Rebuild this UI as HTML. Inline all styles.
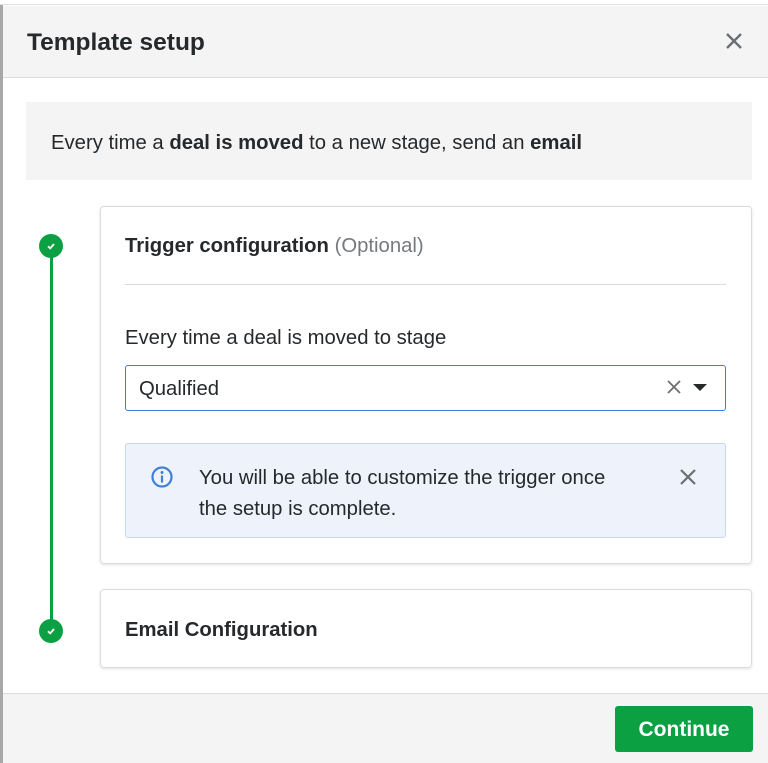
<!DOCTYPE html>
<html><head><style>
*{margin:0;padding:0;box-sizing:border-box}
body{width:768px;height:763px;background:#fff;font-family:"Liberation Sans",sans-serif;color:#26292c;position:relative;overflow:hidden}
.a{position:absolute}
.t{font-size:20.3px;white-space:nowrap}
.dot{width:24px;height:24px;border-radius:50%;background:#0aa043;left:39px}
</style></head><body>
<div class="a" style="left:0;top:0;width:768px;height:5px;background:#fff;border-bottom:1px solid #e0e0e0"></div>
<div class="a" style="left:0;top:5px;width:3px;height:758px;background:#a8a8a8"></div>
<div class="a" style="left:3px;top:6px;width:765px;height:72px;background:#f4f4f4;border-bottom:1px solid #dcdcdc"></div>
<div class="a" style="left:27px;top:29px;font-size:24.5px;font-weight:bold;white-space:nowrap">Template setup</div>
<svg class="a" style="left:725px;top:32px" width="18" height="18" viewBox="0 0 18 18"><path d="M2 2L16 16M16 2L2 16" stroke="#6b6f73" stroke-width="2.4"/></svg>
<div class="a" style="left:26px;top:102px;width:726px;height:78px;background:#f4f4f4"></div>
<div class="a t" style="left:51px;top:132px">Every time a <b>deal is moved</b> to a new stage, send an <b>email</b></div>
<div class="a" style="left:50px;top:246px;width:3px;height:385px;background:#0aa043"></div>
<div class="a dot" style="top:234px"></div>
<div class="a dot" style="top:619px"></div>
<svg class="a" style="left:45px;top:240px" width="12" height="12" viewBox="0 0 12 12"><path d="M3 6.3L5.2 8.3L9 4" stroke="#fff" stroke-width="1.8" fill="none"/></svg>
<svg class="a" style="left:45px;top:625px" width="12" height="12" viewBox="0 0 12 12"><path d="M3 6.3L5.2 8.3L9 4" stroke="#fff" stroke-width="1.8" fill="none"/></svg>
<div class="a" style="left:100px;top:206px;width:652px;height:358px;border:1px solid #dcdcdc;border-radius:4px;box-shadow:0 1px 3px rgba(0,0,0,.12)"></div>
<div class="a t" style="left:125px;top:235px"><b>Trigger configuration</b> <span style="color:#767a7e">(Optional)</span></div>
<div class="a" style="left:125px;top:284px;width:601px;height:1px;background:#dcdcdc"></div>
<div class="a t" style="left:125px;top:327px">Every time a deal is moved to stage</div>
<div class="a" style="left:125px;top:365px;width:601px;height:46px;border:1px solid #3f80d6;border-radius:3px"></div>
<div class="a t" style="left:139px;top:378px">Qualified</div>
<svg class="a" style="left:666px;top:379px" width="16" height="16" viewBox="0 0 16 16"><path d="M2 2L14 14M14 2L2 14" stroke="#6b6f73" stroke-width="1.8"/></svg>
<svg class="a" style="left:692px;top:383px" width="16" height="10" viewBox="0 0 16 10"><path d="M1 1H15L8 8Z" fill="#26292c"/></svg>
<div class="a" style="left:125px;top:443px;width:601px;height:95px;background:#eef3fb;border:1px solid #c8d8ef;border-radius:3px"></div>
<svg class="a" style="left:150px;top:465px" width="24" height="24" viewBox="0 0 24 24"><circle cx="12" cy="12" r="9.5" stroke="#3f80d6" stroke-width="2.2" fill="none"/><circle cx="12" cy="7.5" r="1.5" fill="#3f80d6"/><rect x="10.9" y="10.5" width="2.2" height="7" fill="#3f80d6"/></svg>
<div class="a t" style="left:199px;top:463px;line-height:31px">You will be able to customize the trigger once<br>the setup is complete.</div>
<svg class="a" style="left:679px;top:468px" width="18" height="18" viewBox="0 0 18 18"><path d="M2 2L16 16M16 2L2 16" stroke="#6b6f73" stroke-width="2.2"/></svg>
<div class="a" style="left:100px;top:589px;width:652px;height:79px;border:1px solid #dcdcdc;border-radius:4px;box-shadow:0 1px 3px rgba(0,0,0,.12)"></div>
<div class="a t" style="left:125px;top:619px;font-weight:bold">Email Configuration</div>
<div class="a" style="left:3px;top:693px;width:765px;height:70px;background:#f4f4f4;border-top:1px solid #dcdcdc"></div>
<div class="a" style="left:615px;top:706px;width:138px;height:46px;background:#0ba143;border-radius:3px;color:#fff;font-size:21px;font-weight:bold;text-align:center;line-height:48px">Continue</div>
</body></html>
